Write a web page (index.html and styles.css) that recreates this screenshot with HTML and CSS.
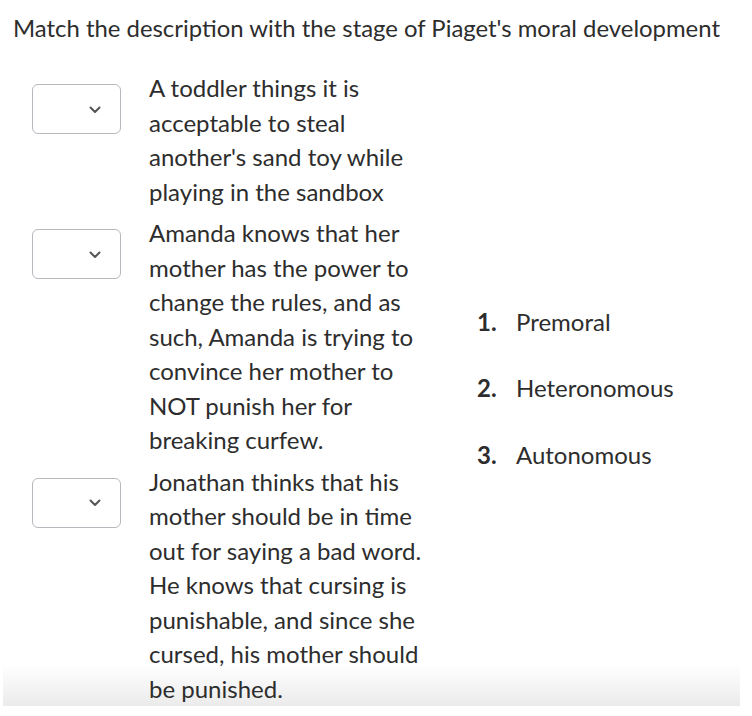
FILE: index.html
```html
<!DOCTYPE html>
<html>
<head>
<meta charset="utf-8">
<link rel="stylesheet" href="styles.css">
</head>
<body>
<div class="page">
  <div class="fade"></div>
  <h1 class="title">Match the description with the stage of Piaget's moral development</h1>
  <div class="match">
    <div class="rows">
      <div class="row">
        <div class="select"><svg width="12" height="8" viewBox="0 0 12 8"><path d="M1.5 1.5 L6 6 L10.5 1.5" fill="none" stroke="#555" stroke-width="2" stroke-linecap="round" stroke-linejoin="round"/></svg></div>
        <p class="desc">A toddler things it is acceptable to steal another's sand toy while playing in the sandbox</p>
      </div>
      <div class="row">
        <div class="select"><svg width="12" height="8" viewBox="0 0 12 8"><path d="M1.5 1.5 L6 6 L10.5 1.5" fill="none" stroke="#555" stroke-width="2" stroke-linecap="round" stroke-linejoin="round"/></svg></div>
        <p class="desc">Amanda knows that her mother has the power to change the rules, and as such, Amanda is trying to convince her mother to NOT punish her for breaking curfew.</p>
      </div>
      <div class="row">
        <div class="select"><svg width="12" height="8" viewBox="0 0 12 8"><path d="M1.5 1.5 L6 6 L10.5 1.5" fill="none" stroke="#555" stroke-width="2" stroke-linecap="round" stroke-linejoin="round"/></svg></div>
        <p class="desc">Jonathan thinks that his mother should be in time out for saying a bad word. He knows that cursing is punishable, and since she cursed, his mother should be punished.</p>
      </div>
    </div>
    <ol class="options">
      <li><span class="num">1.</span><span>Premoral</span></li>
      <li><span class="num">2.</span><span>Heteronomous</span></li>
      <li><span class="num">3.</span><span>Autonomous</span></li>
    </ol>
  </div>
</div>
</body>
</html>
```

FILE: styles.css
```css
html, body {
  margin: 0;
  padding: 0;
  background: #ffffff;
}
body {
  font-family: Lato, "Open Sans", sans-serif;
  color: #2d2d2d;
}
.page {
  position: relative;
  width: 752px;
  height: 716px;
  overflow: hidden;
}
.title {
  position: relative;
  margin: 0;
  padding: 13px 0 0 13px;
  font-size: 23.9px;
  font-weight: 400;
  line-height: 30px;
  white-space: nowrap;
}
.match {
  position: relative;
  display: flex;
  align-items: center;
  margin-top: 28px;
}
.rows {
  display: flex;
  flex-direction: column;
  gap: 7px;
}
.row {
  display: flex;
  align-items: flex-start;
}
.select {
  box-sizing: border-box;
  width: 89px;
  height: 50px;
  margin: 13px 28px 0 32px;
  border: 1px solid #b5b9bd;
  border-radius: 6px;
  background: #fff;
  display: flex;
  align-items: center;
  justify-content: flex-end;
  padding-right: 19px;
  padding-top: 1px;
}
.desc {
  margin: 0;
  width: 275px;
  font-size: 24px;
  line-height: 34.5px;
}
.options {
  list-style: none;
  margin: 0 0 0 53px;
  padding: 0;
  display: flex;
  flex-direction: column;
  gap: 32px;
  font-size: 24px;
  line-height: 34.5px;
}
.options li {
  display: flex;
}
.num {
  font-weight: 700;
  width: 39px;
}
.fade {
  position: absolute;
  left: 3px;
  right: 12px;
  top: 664px;
  height: 42px;
  background: linear-gradient(to bottom, rgba(240,240,240,0), #ebebeb);
}
```
